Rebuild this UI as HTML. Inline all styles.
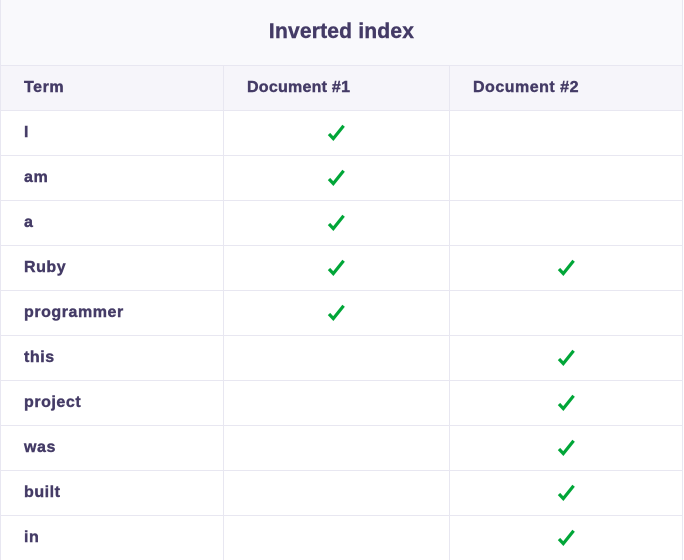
<!DOCTYPE html>
<html><head><meta charset="utf-8"><style>
html,body{margin:0;padding:0;background:#fff}
#p{position:relative;width:684px;height:560px;overflow:hidden;background:#fff;font-family:"Liberation Sans",sans-serif;font-weight:700;color:#443b66}
.a{position:absolute}
.h{background:#e8e7f1}
.t{position:absolute;font-size:16px;line-height:20px;white-space:nowrap;letter-spacing:.55px;-webkit-text-stroke:.4px #443b66}
.d{letter-spacing:.25px}
svg{position:absolute;width:20px;height:18px}
</style></head><body><div id="p">
<div class="a" style="left:0;top:0;width:683px;height:65px;background:#f9f9fc"></div>
<div class="a" style="left:0;top:65px;width:683px;height:45px;background:#f6f5fa"></div>
<div class="a" style="left:0;top:32px;width:683px;text-align:center;font-size:21px;line-height:0;letter-spacing:.2px;-webkit-text-stroke:.4px #443b66">Inverted index</div>
<div class="a h" style="left:0;top:0;width:1px;height:560px"></div>
<div class="a h" style="left:682px;top:0;width:1px;height:560px"></div>
<div class="a h" style="left:223px;top:65px;width:1px;height:495px"></div>
<div class="a h" style="left:449px;top:65px;width:1px;height:495px"></div>
<div class="a h" style="left:0;top:65px;width:683px;height:1px"></div>
<div class="a h" style="left:0;top:110px;width:683px;height:1px"></div>
<div class="a h" style="left:0;top:155px;width:683px;height:1px"></div>
<div class="a h" style="left:0;top:200px;width:683px;height:1px"></div>
<div class="a h" style="left:0;top:245px;width:683px;height:1px"></div>
<div class="a h" style="left:0;top:290px;width:683px;height:1px"></div>
<div class="a h" style="left:0;top:335px;width:683px;height:1px"></div>
<div class="a h" style="left:0;top:380px;width:683px;height:1px"></div>
<div class="a h" style="left:0;top:425px;width:683px;height:1px"></div>
<div class="a h" style="left:0;top:470px;width:683px;height:1px"></div>
<div class="a h" style="left:0;top:515px;width:683px;height:1px"></div>
<div class="t" style="left:24px;top:78px">Term</div>
<div class="t d" style="left:247px;top:78px">Document #1</div>
<div class="t d" style="left:473px;top:78px;letter-spacing:.5px">Document #2</div>
<div class="t" style="left:24px;top:123px">I</div>
<div class="t" style="left:24px;top:168px">am</div>
<div class="t" style="left:24px;top:213px">a</div>
<div class="t" style="left:24px;top:258px">Ruby</div>
<div class="t" style="left:24px;top:303px">programmer</div>
<div class="t" style="left:24px;top:348px">this</div>
<div class="t" style="left:24px;top:393px">project</div>
<div class="t" style="left:24px;top:438px">was</div>
<div class="t" style="left:24px;top:483px">built</div>
<div class="t" style="left:24px;top:528px">in</div>
<svg style="left:326px;top:124px" viewBox="0 0 20 18"><path d="M3 10 7.3 14.6 17.6 1.8" fill="none" stroke="#01a638" stroke-width="3.2"/></svg>
<svg style="left:326px;top:169px" viewBox="0 0 20 18"><path d="M3 10 7.3 14.6 17.6 1.8" fill="none" stroke="#01a638" stroke-width="3.2"/></svg>
<svg style="left:326px;top:214px" viewBox="0 0 20 18"><path d="M3 10 7.3 14.6 17.6 1.8" fill="none" stroke="#01a638" stroke-width="3.2"/></svg>
<svg style="left:326px;top:259px" viewBox="0 0 20 18"><path d="M3 10 7.3 14.6 17.6 1.8" fill="none" stroke="#01a638" stroke-width="3.2"/></svg>
<svg style="left:326px;top:304px" viewBox="0 0 20 18"><path d="M3 10 7.3 14.6 17.6 1.8" fill="none" stroke="#01a638" stroke-width="3.2"/></svg>
<svg style="left:556px;top:259px" viewBox="0 0 20 18"><path d="M3 10 7.3 14.6 17.6 1.8" fill="none" stroke="#01a638" stroke-width="3.2"/></svg>
<svg style="left:556px;top:349px" viewBox="0 0 20 18"><path d="M3 10 7.3 14.6 17.6 1.8" fill="none" stroke="#01a638" stroke-width="3.2"/></svg>
<svg style="left:556px;top:394px" viewBox="0 0 20 18"><path d="M3 10 7.3 14.6 17.6 1.8" fill="none" stroke="#01a638" stroke-width="3.2"/></svg>
<svg style="left:556px;top:439px" viewBox="0 0 20 18"><path d="M3 10 7.3 14.6 17.6 1.8" fill="none" stroke="#01a638" stroke-width="3.2"/></svg>
<svg style="left:556px;top:484px" viewBox="0 0 20 18"><path d="M3 10 7.3 14.6 17.6 1.8" fill="none" stroke="#01a638" stroke-width="3.2"/></svg>
<svg style="left:556px;top:529px" viewBox="0 0 20 18"><path d="M3 10 7.3 14.6 17.6 1.8" fill="none" stroke="#01a638" stroke-width="3.2"/></svg>
</div></body></html>
